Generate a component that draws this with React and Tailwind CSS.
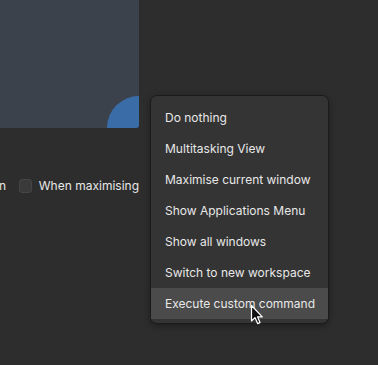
const items = [
  "Do nothing",
  "Multitasking View",
  "Maximise current window",
  "Show Applications Menu",
  "Show all windows",
  "Switch to new workspace",
  "Execute custom command",
];

function Cursor() {
  return (
    <svg width="14" height="22" viewBox="0 0 14 22" className="absolute left-[250px] top-[304px]">
      <path d="M1.5 1.5 L1.5 17 L5 13.6 L7.6 19.6 L10 18.6 L7.5 12.8 L12.3 12.8 Z" fill="#111" stroke="#fff" strokeWidth="1.2" strokeLinejoin="round" />
    </svg>
  );
}

export default function App() {
  return (
    <div className="relative w-[378px] h-[365px] overflow-hidden bg-[#2d2d2d] text-[12px] text-[#e8e8e8]" style={{ fontFamily: "Inter, 'Noto Sans', sans-serif" }}>
      <div className="flex items-start">
        <div className="flex flex-col w-[139px] shrink-0">
          <div className="relative w-[139px] h-[128px] bg-[#3b424c] rounded-br-[3px] overflow-hidden">
            <div className="absolute left-[107px] top-[96px] w-[64px] h-[64px] rounded-full bg-[#3a6ca8]" />
          </div>
          <div className="flex items-center mt-[49px] ml-[-1px] whitespace-nowrap">
            <span>n</span>
            <div className="w-[14px] h-[14px] ml-[13px] rounded-[3px] bg-[#3a3a3a] border border-[#454545]" />
            <span className="ml-[7px]">When maximising</span>
          </div>
        </div>
        <div className="ml-[11px] mt-[95px] w-[179px] rounded-[7px] border border-[#1b1b1b] bg-[#343434] pt-[6px] pb-[4px] shadow-[0_2px_6px_rgba(0,0,0,0.35)]">
          {items.map((t, i) => (
            <div key={t} className={`h-[31px] flex items-center pl-[14px] ${i === items.length - 1 ? "bg-[#4b4b4b]" : ""}`}>
              {t}
            </div>
          ))}
        </div>
      </div>
      <Cursor />
    </div>
  );
}
